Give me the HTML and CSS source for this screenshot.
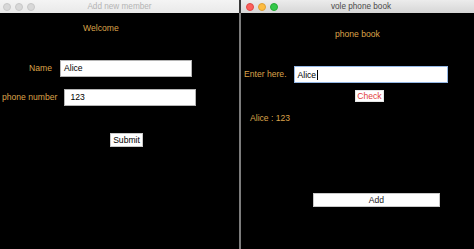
FILE: index.html
```html
<!DOCTYPE html>
<html>
<head>
<meta charset="utf-8">
<link rel="stylesheet" href="styles.css">
</head>
<body>
<div class="desktop">
  <section class="win win-left">
    <header class="titlebar inactive">
      <div class="lights"><span class="dot"></span><span class="dot"></span><span class="dot"></span></div>
      <span class="title">Add new member</span>
      <span></span>
    </header>
    <div class="body left-body">
      <div class="heading welcome">Welcome</div>
      <div class="row row-name">
        <label class="lbl name-lbl">Name</label>
        <div class="field name-field">Alice</div>
      </div>
      <div class="row row-phone">
        <label class="lbl phone-lbl">phone number</label>
        <div class="field phone-field">123</div>
      </div>
      <div class="row row-submit">
        <button class="btn submit">Submit</button>
      </div>
    </div>
  </section>
  <div class="divider"></div>
  <section class="win win-right">
    <header class="titlebar active">
      <div class="lights"><span class="dot red"></span><span class="dot yellow"></span><span class="dot green"></span></div>
      <span class="title">vole phone book</span>
      <span></span>
    </header>
    <div class="body right-body">
      <div class="heading book">phone book</div>
      <div class="row row-enter">
        <label class="lbl enter-lbl">Enter here.</label>
        <div class="field search-field">Alice<span class="caret"></span></div>
      </div>
      <div class="row row-check">
        <button class="btn check">Check</button>
      </div>
      <div class="result">Alice : 123</div>
      <div class="row row-add">
        <button class="btn add">Add</button>
      </div>
    </div>
  </section>
</div>
</body>
</html>
```
FILE: styles.css
```css
* { box-sizing: border-box; }
html, body { margin: 0; padding: 0; background: #000; }
body {
  width: 474px;
  height: 249px;
  overflow: hidden;
  font-family: "Liberation Sans", Arial, sans-serif;
  font-size: 8.6px;
}
.desktop { display: flex; height: 249px; }
.win { display: flex; flex-direction: column; background: #000; }
.win-left { width: 239px; }
.win-right { width: 233px; }
.divider {
  width: 2px;
  background: linear-gradient(to bottom, #3a3a3a 0, #3a3a3a 13px, #7c7c7c 13px, #7c7c7c 100%);
}
.titlebar {
  height: 13px;
  display: grid;
  grid-template-columns: 1fr auto 1fr;
  align-items: center;
  font-size: 8.2px;
  line-height: 13px;
}
.titlebar.inactive { background: linear-gradient(#f4f4f4, #e9e9e9); color: #b4b4b4; }
.titlebar.active { background: linear-gradient(#ececec, #d6d6d6); color: #4a4a4a; }
.lights { display: flex; gap: 4px; align-items: center; }
.inactive .lights { padding-left: 3px; }
.active .lights { padding-left: 5px; }
.dot { width: 8px; height: 8px; border-radius: 50%; background: #d8d8d8; border: 0.5px solid #c8c8c8; }
.dot.red { background: #fc605c; border-color: #df4744; }
.dot.yellow { background: #fdbc40; border-color: #de9f34; }
.dot.green { background: #34c84a; border-color: #27aa35; }
.active .title { padding-left: 7px; }

.body { flex: 1; color: #dca34a; }
.heading { height: 11px; line-height: 11px; }
.welcome { margin-top: 10px; padding-left: 83px; }
.row { display: flex; align-items: center; }
.lbl { line-height: 11px; color: #dca34a; }
.field {
  height: 17px;
  line-height: 15px;
  background: #fff;
  border: 1px solid #b5b5b5;
  color: #000;
  padding-left: 3px;
}
.row-name { margin-top: 26px; }
.name-lbl { width: 52px; text-align: right; margin-right: 8px; }
.name-field { width: 132px; }
.row-phone { margin-top: 12px; }
.phone-lbl { margin-left: 2px; margin-right: 7px; }
.phone-field { width: 132px; padding-left: 5px; }
.btn {
  font-family: inherit;
  font-size: 8.6px;
  background: #fff;
  border: 1px solid #c9c9c9;
  color: #000;
  padding: 0;
  margin: 0;
}
.row-submit { margin-top: 27px; padding-left: 110px; }
.submit { width: 33px; height: 14px; line-height: 12px; }

.book { margin-top: 16px; padding-left: 94px; }
.row-enter { margin-top: 26px; }
.enter-lbl { margin-left: 3px; margin-right: 7px; }
.search-field {
  width: 154px;
  border: 1.5px solid #95b8e6;
  line-height: 14px;
  display: flex;
  align-items: center;
}
.caret { display: inline-block; width: 1px; height: 10px; background: #000; margin-left: 0.5px; }
.row-check { margin-top: 7px; padding-left: 114px; }
.check { width: 29px; height: 12px; line-height: 10px; color: #e2403b; border-color: #e6e6e6; }
.result { margin-top: 11px; padding-left: 9px; line-height: 11px; height: 11px; }
.row-add { margin-top: 69px; padding-left: 72px; }
.add { width: 127px; height: 14px; line-height: 12px; color: #222; }
```
